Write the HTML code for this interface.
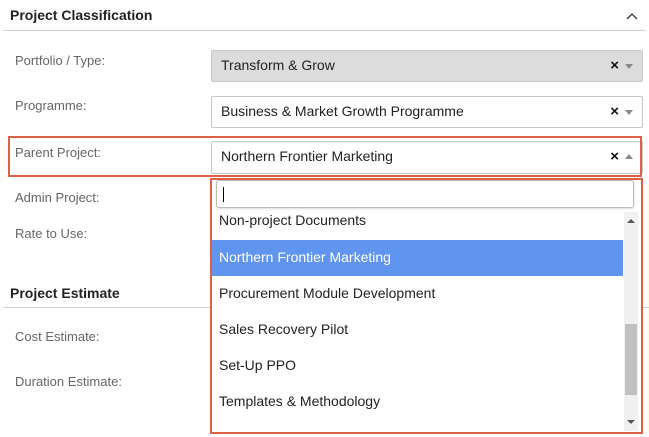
<!DOCTYPE html>
<html><head><meta charset="utf-8"><style>
*{box-sizing:border-box;margin:0;padding:0}
body{width:649px;height:437px;background:#fff;font-family:"Liberation Sans",sans-serif;font-size:13px;color:#222;position:relative;overflow:hidden}
.a{position:absolute}
.h{font-weight:bold;font-size:14px;color:#222}
.lbl{color:#666;font-size:13px}
.line{height:1px;background:#d0d0d0}
.box{border:1px solid #c8c8c8;border-radius:2px;background:#fff}
.box span{position:absolute;left:9px;top:6px;font-size:14px;color:#222}
.x{position:absolute;right:23px;top:6px;font-weight:bold;font-size:15px;color:#111}
.tri{position:absolute;right:9px;top:13px;width:0;height:0;border-left:4px solid transparent;border-right:4px solid transparent;border-top:5px solid #888}
.up{border-top:none;border-bottom:5px solid #888;top:12px}
.red{border:2px solid #dd6145}
.it{position:absolute;left:1px;width:411px;height:36px;padding:9px 0 0 7px;font-size:14px;color:#222}
</style></head><body>
<div class="a h" style="left:10px;top:7px">Project Classification</div>
<svg class="a" style="left:626px;top:12px" width="12" height="8"><path d="M1 7 L6 2 L11 7" stroke="#333" stroke-width="1.3" fill="none"/></svg>
<div class="a line" style="left:3px;top:30px;width:643px"></div>

<div class="a lbl" style="left:15px;top:53px">Portfolio / Type:</div>
<div class="a box" style="left:211px;top:50px;width:432px;height:32px;background:#dcdcdc"><span>Transform &amp; Grow</span><b class="x">×</b><i class="tri"></i></div>

<div class="a lbl" style="left:15px;top:98px">Programme:</div>
<div class="a box" style="left:211px;top:96px;width:432px;height:32px"><span>Business &amp; Market Growth Programme</span><b class="x">×</b><i class="tri"></i></div>

<div class="a lbl" style="left:15px;top:145px">Parent Project:</div>
<div class="a box" style="left:211px;top:141px;width:432px;height:33px"><span>Northern Frontier Marketing</span><b class="x">×</b><i class="tri up"></i></div>
<div class="a red" style="left:8px;top:136px;width:634px;height:41px"></div>

<div class="a lbl" style="left:15px;top:190px">Admin Project:</div>
<div class="a lbl" style="left:15px;top:226px">Rate to Use:</div>

<div class="a h" style="left:10px;top:285px">Project Estimate</div>
<div class="a line" style="left:3px;top:307px;width:210px"></div>
<div class="a line" style="left:640px;top:307px;width:9px"></div>
<div class="a lbl" style="left:15px;top:329px">Cost Estimate:</div>
<div class="a lbl" style="left:15px;top:374px">Duration Estimate:</div>

<div class="a" style="left:211px;top:178px;width:431px;height:255px;background:#fff">
  <div class="a" style="left:5px;top:2px;width:418px;height:28px;border:1px solid #bbb;border-radius:3px;box-shadow:0 1px 2px rgba(0,0,0,.15)"><div class="a" style="left:6px;top:6px;width:1px;height:15px;background:#000"></div></div>
  <div class="it" style="top:25px">Non-project Documents</div>
  <div class="it" style="top:62px;background:#5f95ef;color:#fff">Northern Frontier Marketing</div>
  <div class="it" style="top:98px">Procurement Module Development</div>
  <div class="it" style="top:134px">Sales Recovery Pilot</div>
  <div class="it" style="top:170px">Set-Up PPO</div>
  <div class="it" style="top:206px">Templates &amp; Methodology</div>
  <div class="a" style="left:413px;top:34px;width:14px;height:219px;background:#f0f0f0">
    <div class="a" style="left:3px;top:7px;border-left:4px solid transparent;border-right:4px solid transparent;border-bottom:4px solid #555"></div>
    <div class="a" style="left:1px;top:112px;width:12px;height:71px;background:#c1c1c1"></div>
    <div class="a" style="left:3px;top:208px;border-left:4px solid transparent;border-right:4px solid transparent;border-top:4px solid #555"></div>
  </div>
</div>
<div class="a red" style="left:210px;top:178px;width:433px;height:256px"></div>
</body></html>
